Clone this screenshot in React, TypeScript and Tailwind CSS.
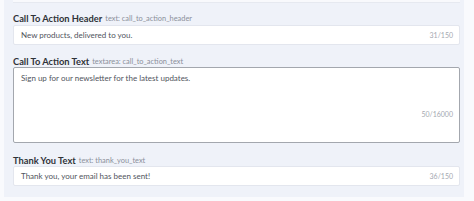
import React from "react";

function Label({ name, hint }: { name: string; hint: string }) {
  return (
    <div className="h-[10px] flex items-center whitespace-nowrap leading-[10px]">
      <span className="font-bold text-[9.3px] text-[#2f3238]">{name}</span>
      <span className="ml-[3px] text-[7.4px] text-[#8b909a]">{hint}</span>
    </div>
  );
}

function Input({ value, counter }: { value: string; counter: string }) {
  return (
    <div className="h-[20px] bg-white border border-[#e3e6ee] rounded-[2px] flex items-center justify-between pl-[7px] pr-[6px]">
      <span className="text-[8px] text-[#50545c]">{value}</span>
      <span className="text-[7px] text-[#a4a8b0]">{counter}</span>
    </div>
  );
}

export default function App() {
  return (
    <div
      className="w-[474px] h-[201px] bg-[#f9fafd] pl-[4px] pr-[10px] overflow-hidden"
      style={{ fontFamily: "Lato, 'Noto Sans', sans-serif" }}
    >
      <div className="h-[197px] bg-[#eff2f9] pl-[9px] pr-[4px] flex flex-col">
        <div className="h-[3px] bg-[#f8f9fc] border-b border-[#e6e9f0]" />
        <div className="mt-[11px]">
          <Label name="Call To Action Header" hint="text: call_to_action_header" />
        </div>
        <div className="mt-[1px]">
          <Input value="New products, delivered to you." counter="31/150" />
        </div>
        <div className="mt-[12px]">
          <Label name="Call To Action Text" hint="textarea: call_to_action_text" />
        </div>
        <div className="h-[76px] bg-white border border-[#a3a7ae] rounded-[2px] pl-[7px] pr-[6px] pt-[5px] flex flex-col">
          <span className="text-[8px] leading-[10px] text-[#50545c]">
            Sign up for our newsletter for the latest updates.
          </span>
          <span className="mt-[26px] self-end text-[7px] leading-[10px] text-[#a4a8b0]">50/16000</span>
        </div>
        <div className="mt-[13px]">
          <Label name="Thank You Text" hint="text: thank_you_text" />
        </div>
        <div>
          <Input value="Thank you, your email has been sent!" counter="36/150" />
        </div>
      </div>
    </div>
  );
}
